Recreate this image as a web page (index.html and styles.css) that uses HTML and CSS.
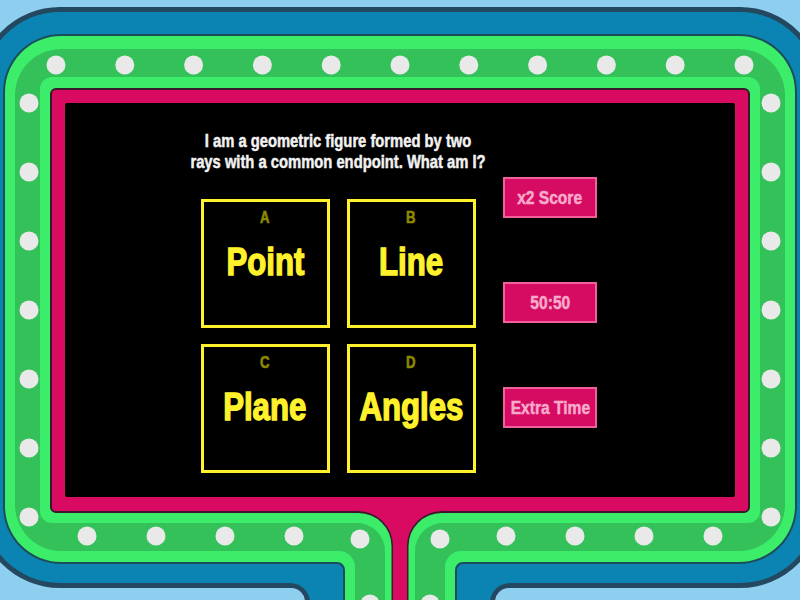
FILE: index.html
```html
<!DOCTYPE html>
<html lang="en">
<head>
<meta charset="utf-8">
<title>Gameshow Quiz</title>
<link rel="stylesheet" href="styles.css">
</head>
<body>
<div class="stage">
  <svg class="frame" viewBox="0 0 800 600" width="800" height="600" aria-hidden="true">
    <rect class="sky" x="0" y="0" width="800" height="600"/>
    <path class="navy" d="M60,7 H740 A82,82 0 0 1 822,89 V506 A82,82 0 0 1 740,588 H509 A14,14 0 0 0 495,602 V620 H305 V602 A14,14 0 0 0 291,588 H60 A82,82 0 0 1 -22,506 V89 A82,82 0 0 1 60,7 Z"/>
    <path class="blue" d="M60,12 H740 A77,77 0 0 1 817,89 V506 A77,77 0 0 1 740,583 H510 A20,20 0 0 0 490,603 V620 H310 V603 A20,20 0 0 0 290,583 H60 A77,77 0 0 1 -17,506 V89 A77,77 0 0 1 60,12 Z"/>
    <path class="edge" d="M61,34 H739 A58,58 0 0 1 797,92 V506 A58,58 0 0 1 739,564 H463 A6,6 0 0 0 457,570 V620 H343 V570 A6,6 0 0 0 337,564 H61 A58,58 0 0 1 3,506 V92 A58,58 0 0 1 61,34 Z"/>
    <path class="bright" d="M61,36 H739 A56,56 0 0 1 795,92 V506 A56,56 0 0 1 739,562 H463 A8,8 0 0 0 455,570 V620 H345 V570 A8,8 0 0 0 337,562 H61 A56,56 0 0 1 5,506 V92 A56,56 0 0 1 61,36 Z"/>
    <path class="mid" d="M61,49 H739 A46,46 0 0 1 785,95 V505 A46,46 0 0 1 739,551 H461 A16,16 0 0 0 445,567 V620 H355 V567 A16,16 0 0 0 339,551 H61 A46,46 0 0 1 15,505 V95 A46,46 0 0 1 61,49 Z"/>
    <path class="bright" d="M52,77 H748 A12,12 0 0 1 760,89 V511 A12,12 0 0 1 748,523 H443 A28,28 0 0 0 415,551 V620 H385 V551 A28,28 0 0 0 357,523 H52 A12,12 0 0 1 40,511 V89 A12,12 0 0 1 52,77 Z"/>
    <path class="shade" d="M56,88 H744 A6,6 0 0 1 750,94 V507 A6,6 0 0 1 744,513 H441.5 A33,33 0 0 0 408.5,546 V620 H391.5 V546 A33,33 0 0 0 358.5,513 H56 A6,6 0 0 1 50,507 V94 A6,6 0 0 1 56,88 Z"/>
    <path class="pink" d="M56,90 H744 A4,4 0 0 1 748,94 V507 A4,4 0 0 1 744,511 H442 A35,35 0 0 0 407,546 V620 H393 V546 A35,35 0 0 0 358,511 H56 A4,4 0 0 1 52,507 V94 A4,4 0 0 1 56,90 Z"/>
    <g class="dots">
      <circle cx="56" cy="65" r="9.5"/><circle cx="124.8" cy="65" r="9.5"/><circle cx="193.6" cy="65" r="9.5"/><circle cx="262.4" cy="65" r="9.5"/><circle cx="331.2" cy="65" r="9.5"/><circle cx="400" cy="65" r="9.5"/><circle cx="468.8" cy="65" r="9.5"/><circle cx="537.6" cy="65" r="9.5"/><circle cx="606.4" cy="65" r="9.5"/><circle cx="675.2" cy="65" r="9.5"/><circle cx="744" cy="65" r="9.5"/>
      <circle cx="29" cy="103" r="9.5"/><circle cx="29" cy="172" r="9.5"/><circle cx="29" cy="241" r="9.5"/><circle cx="29" cy="310" r="9.5"/><circle cx="29" cy="379" r="9.5"/><circle cx="29" cy="448" r="9.5"/><circle cx="29" cy="517" r="9.5"/>
      <circle cx="771" cy="103" r="9.5"/><circle cx="771" cy="172" r="9.5"/><circle cx="771" cy="241" r="9.5"/><circle cx="771" cy="310" r="9.5"/><circle cx="771" cy="379" r="9.5"/><circle cx="771" cy="448" r="9.5"/><circle cx="771" cy="517" r="9.5"/>
      <circle cx="87" cy="536" r="9.5"/><circle cx="156" cy="536" r="9.5"/><circle cx="225" cy="536" r="9.5"/><circle cx="294" cy="536" r="9.5"/><circle cx="360" cy="539" r="9.5"/>
      <circle cx="440" cy="539" r="9.5"/><circle cx="506" cy="536" r="9.5"/><circle cx="575" cy="536" r="9.5"/><circle cx="644" cy="536" r="9.5"/><circle cx="713" cy="536" r="9.5"/>
      <circle cx="370" cy="604" r="9.5"/><circle cx="430" cy="604" r="9.5"/>
    </g>
  </svg>

  <main class="screen">
    <section class="quiz">
      <p class="question">I am a geometric figure formed by two<br>rays with a common endpoint. What am I?</p>
      <div class="answers">
        <button class="card" type="button"><span class="letter">A</span><span class="word">Point</span></button>
        <button class="card" type="button"><span class="letter">B</span><span class="word">Line</span></button>
        <button class="card" type="button"><span class="letter">C</span><span class="word">Plane</span></button>
        <button class="card" type="button"><span class="letter">D</span><span class="word">Angles</span></button>
      </div>
    </section>
    <aside class="powers">
      <button class="power" type="button"><span class="label">x2 Score</span></button>
      <button class="power" type="button"><span class="label">50:50</span></button>
      <button class="power" type="button"><span class="label">Extra Time</span></button>
    </aside>
  </main>
</div>
</body>
</html>
```

FILE: styles.css
```css
html, body {
  margin: 0;
  padding: 0;
}

body {
  background: #8ecff0;
  font-family: "Liberation Sans", Arial, sans-serif;
}

.stage {
  position: relative;
  width: 800px;
  height: 600px;
  overflow: hidden;
  box-sizing: border-box;
  padding: 103px 0 0 65px;
}

.frame {
  position: absolute;
  left: 0;
  top: 0;
  display: block;
}

.sky { fill: #8ecff0; }
.navy { fill: #24485f; }
.blue { fill: #0c84b3; }
.edge { fill: #1b4d5a; }
.bright { fill: #3ced6a; }
.mid { fill: #34c15a; }
.shade { fill: #3a1a2a; }
.pink { fill: #d80a62; }
.dots circle { fill: #e9e9e9; }

.screen {
  position: relative;
  width: 670px;
  height: 394px;
  box-sizing: border-box;
  background: #000;
  border-radius: 2px;
  display: flex;
  padding: 28px 0 0 120px;
}

.quiz {
  width: 306px;
  display: flex;
  flex-direction: column;
  align-items: center;
}

/* narrow heavy display face: Liberation Sans Bold condensed horizontally */
.question,
.letter,
.word,
.label {
  display: inline-block;
  transform: scaleX(0.82);
  white-space: nowrap;
}

.question {
  margin: 0;
  color: #f2f2f2;
  font-weight: bold;
  font-size: 18px;
  line-height: 21px;
  text-align: center;
  -webkit-text-stroke: 0.5px #f2f2f2;
}

.answers {
  margin-top: 26px;
  display: grid;
  grid-template-columns: 129px 129px;
  column-gap: 17px;
  row-gap: 16px;
}

.card {
  box-sizing: border-box;
  width: 129px;
  height: 129px;
  margin: 0;
  padding: 7px 0 0;
  border: 3px solid #fff22c;
  background: #000;
  display: flex;
  flex-direction: column;
  align-items: center;
  font-family: inherit;
  font-weight: bold;
  cursor: pointer;
}

.letter {
  color: #8e8a00;
  font-size: 16px;
  line-height: 18px;
  -webkit-text-stroke: 0.6px #8e8a00;
}

.word {
  margin-top: 13px;
  color: #fff22c;
  font-size: 38px;
  line-height: 44px;
  -webkit-text-stroke: 1.4px #fff22c;
}

.powers {
  margin-left: 12px;
  padding-top: 46px;
  display: flex;
  flex-direction: column;
  gap: 64px;
}

.power {
  box-sizing: border-box;
  width: 94px;
  height: 41px;
  margin: 0;
  padding: 0;
  border: 2px solid #f0609a;
  background: #d60b62;
  color: #f9aacb;
  font-family: inherit;
  font-weight: bold;
  font-size: 19px;
  line-height: 1;
  display: flex;
  align-items: center;
  justify-content: center;
  overflow: visible;
  cursor: pointer;
}

.label {
  -webkit-text-stroke: 0.5px #f9aacb;
}
```
